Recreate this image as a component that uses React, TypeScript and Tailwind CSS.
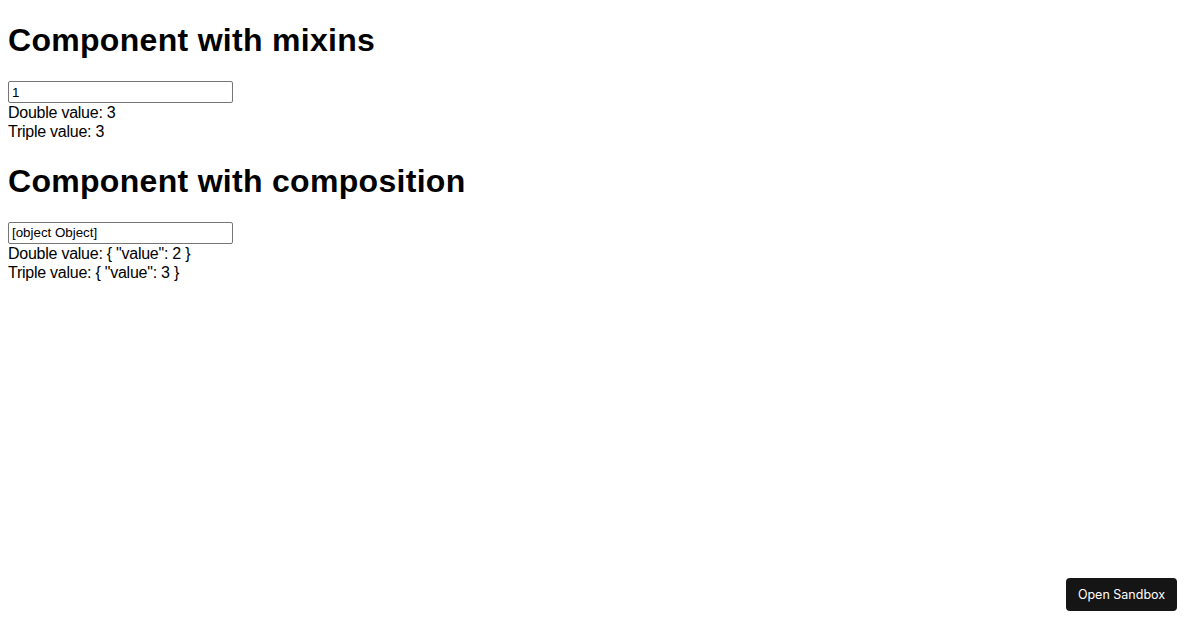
import React from 'react';

interface SectionProps {
    title: string,
    inputValue: string,
    double: string,
    triple: string,
}

const Section: React.FC<SectionProps> = ({ title, inputValue, double, triple }: SectionProps) => {
    return (
        <div>
            <h1 className="text-[32px] leading-[38px] font-bold tracking-[0.3px] mt-[20.44px] mb-[21px]">{title}</h1>
            <div className="h-[23px] pt-[1px]">
                <input
                    className="block w-[225px] h-[22px] border border-[#767676] rounded-[2px] px-[3px] text-[13.33px] text-black outline-none"
                    defaultValue={inputValue}
                    style={{ fontFamily: '"Liberation Sans", Arial, sans-serif' }}
                />
            </div>
            <div className="leading-[19px] tracking-[-0.25px]">Double value: {double}</div>
            <div className="leading-[19px] tracking-[-0.25px]">Triple value: {triple}</div>
        </div>
    );
};

export default function App() {
    return (
        <div className="min-h-[630px] bg-white text-black text-base px-2 pt-px" style={{ fontFamily: '"Liberation Sans", Arial, sans-serif' }}>
            <div>
                <Section title="Component with mixins" inputValue="1" double="3" triple="3" />
                <Section title="Component with composition" inputValue="[object Object]" double={'{ "value": 2 }'} triple={'{ "value": 3 }'} />
            </div>
            <button
                className="fixed right-[23px] bottom-[19px] w-[111px] h-[33px] pt-[1px] rounded-[4px] bg-[#151515] text-white text-[12.5px] flex items-center justify-center"
                style={{ fontFamily: 'Inter, "Liberation Sans", sans-serif' }}
            >
                Open Sandbox
            </button>
        </div>
    );
}
